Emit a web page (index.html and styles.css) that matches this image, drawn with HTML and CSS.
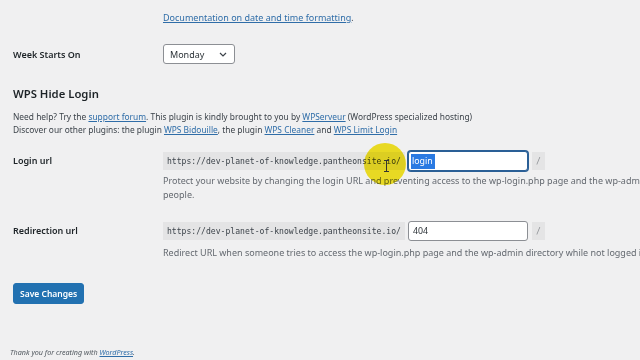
FILE: index.html
```html
<!DOCTYPE html>
<html lang="en">
<head>
    <meta charset="UTF-8">
    <title>General Settings</title>
    <link rel="stylesheet" href="styles.css">
</head>
<body>
    <div class="wrap">
        <div class="form-row first-row">
            <div class="label"></div>
            <div class="field">
                <a href="#" class="doc-link">Documentation on date and time formatting</a>.
            </div>
        </div>

        <div class="form-row week-row">
            <div class="label">Week Starts On</div>
            <div class="field">
                <div class="select">
                    <span>Monday</span>
                    <svg class="chevron" width="8" height="5" viewBox="0 0 8 5"><path d="M1 1 L4 4 L7 1" fill="none" stroke="#3c434a" stroke-width="1.2"/></svg>
                </div>
            </div>
        </div>

        <h2 class="section-title">WPS Hide Login</h2>
        <p class="help">Need help? Try the <a href="#">support forum</a>. This plugin is kindly brought to you by <a href="#">WPServeur</a> (WordPress specialized hosting)<br>
        Discover our other plugins: the plugin <a href="#">WPS Bidouille</a>, the plugin <a href="#">WPS Cleaner</a> and <a href="#">WPS Limit Login</a></p>

        <div class="form-row url-row">
            <div class="label">Login url</div>
            <div class="field">
                <div class="url-line">
                    <code>https://dev-planet-of-knowledge.pantheonsite.io/</code>
                    <div class="text-input focused"><span class="selected">login</span></div>
                    <code class="slash">/</code>
                </div>
                <p class="description">Protect your website by changing the login URL and preventing access to the wp-login.php page and the wp-admin directory to non-connected<br>people.</p>
                <div class="highlight"></div>
                <svg class="ibeam" width="7" height="12" viewBox="0 0 7 12"><path d="M1 0.5 H6 M3.5 0.5 V11.5 M1 11.5 H6" fill="none" stroke="#333" stroke-width="1"/></svg>
            </div>
        </div>

        <div class="form-row url-row second">
            <div class="label">Redirection url</div>
            <div class="field">
                <div class="url-line">
                    <code>https://dev-planet-of-knowledge.pantheonsite.io/</code>
                    <div class="text-input"><span>404</span></div>
                    <code class="slash">/</code>
                </div>
                <p class="description">Redirect URL when someone tries to access the wp-login.php page and the wp-admin directory while not logged in.</p>
            </div>
        </div>

        <div class="submit">
            <button class="button-primary">Save Changes</button>
        </div>
    </div>

    <div class="footer">
        <em>Thank you for creating with <a href="#">WordPress</a>.</em>
    </div>
</body>
</html>
```

FILE: styles.css
```css
body {
    margin: 0;
    background-color: #f0f0f1;
    color: #3c434a;
    font-family: "Noto Sans", "Open Sans", sans-serif;
    font-size: 8.4px;
    line-height: 13px;
    overflow: hidden;
    width: 640px;
    height: 360px;
    position: relative;
}

a {
    color: #2f6da8;
}

.wrap {
    padding: 0 0 0 13px;
}

.form-row {
    display: grid;
    grid-template-columns: 150px 1fr;
}

.label {
    color: #1d2327;
    font-weight: 600;
    font-size: 9px;
}

.first-row {
    padding-top: 11px;
}

.doc-link {
    font-size: 9px;
}

.week-row {
    margin-top: 20px;
    align-items: center;
}

.select {
    width: 72px;
    height: 20px;
    box-sizing: border-box;
    border: 1px solid #8c8f94;
    border-radius: 3px;
    background-color: #fff;
    display: flex;
    align-items: center;
    justify-content: space-between;
    padding: 0 7px 0 6px;
    color: #2c3338;
    font-size: 9px;
}

.section-title {
    margin: 22px 0 0;
    font-size: 11.3px;
    font-weight: 600;
    color: #1d2327;
    line-height: 16px;
}

.help {
    margin: 8px 0 0;
    white-space: nowrap;
}

.url-row {
    margin-top: 15px;
}

.url-row .label {
    padding-top: 3px;
}

.url-row.second {
    margin-top: 19px;
}

.url-row.second .description {
    margin-top: 5px;
}

.field {
    position: relative;
    white-space: nowrap;
}

.url-line {
    display: flex;
    align-items: center;
    gap: 3px;
}

code {
    font-family: "DejaVu Sans Mono", "Liberation Mono", monospace;
    font-size: 8.1px;
    background-color: #e4e4e5;
    padding: 3px 4px;
    line-height: 12px;
    color: #3c434a;
}

.slash {
    margin-left: 1px;
    padding: 3px 4px;
    color: #8c8f94;
}

.text-input {
    width: 120px;
    height: 20px;
    box-sizing: border-box;
    border: 1px solid #8c8f94;
    border-radius: 3px;
    background-color: #fff;
    padding: 0 4px;
    display: flex;
    align-items: center;
    color: #2c3338;
    font-size: 8.8px;
}

.text-input.focused {
    border-color: #2a5f96;
    box-shadow: 0 0 0 1px #2a5f96;
    padding-left: 2px;
}

.selected {
    background-color: #2a7ae2;
    color: #fff;
    padding: 1px 2px 1px 1px;
}

.description {
    margin: 3px 0 0;
    color: #646970;
    font-size: 9px;
    line-height: 14px;
}

.highlight {
    position: absolute;
    left: 201px;
    top: -8px;
    width: 42px;
    height: 42px;
    border-radius: 50%;
    background-color: #f7e619;
    opacity: 0.95;
    mix-blend-mode: multiply;
}

.ibeam {
    position: absolute;
    left: 220px;
    top: 9px;
}

.submit {
    margin-top: 23px;
}

.button-primary {
    background-color: #2271b1;
    border: 1px solid #2271b1;
    border-radius: 3px;
    color: #fff;
    font-family: "Noto Sans", "Open Sans", sans-serif;
    font-size: 8.5px;
    font-weight: 600;
    height: 21px;
    padding: 0 6px;
}

.footer {
    position: absolute;
    left: 10px;
    top: 346px;
    color: #50575e;
    font-size: 7.2px;
}
```
